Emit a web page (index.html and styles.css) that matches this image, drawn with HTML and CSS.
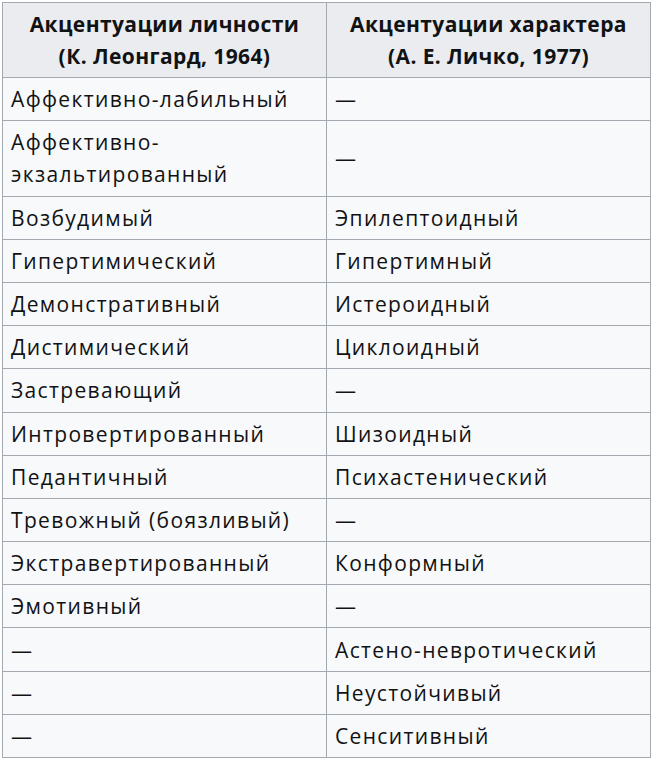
FILE: index.html
```html
<!DOCTYPE html>
<html lang="ru">
<head>
<meta charset="utf-8">
<link rel="stylesheet" href="styles.css">
</head>
<body>
<table class="wikitable">
  <thead>
    <tr>
      <th>Акцентуации личности<br>(К. Леонгард, 1964)</th>
      <th>Акцентуации характера<br>(А. Е. Личко, 1977)</th>
    </tr>
  </thead>
  <tbody>
    <tr><td>Аффективно-лабильный</td><td>—</td></tr>
    <tr><td>Аффективно-<br>экзальтированный</td><td>—</td></tr>
    <tr><td>Возбудимый</td><td>Эпилептоидный</td></tr>
    <tr><td>Гипертимический</td><td>Гипертимный</td></tr>
    <tr><td>Демонстративный</td><td>Истероидный</td></tr>
    <tr><td>Дистимический</td><td>Циклоидный</td></tr>
    <tr><td>Застревающий</td><td>—</td></tr>
    <tr><td>Интровертированный</td><td>Шизоидный</td></tr>
    <tr><td>Педантичный</td><td>Психастенический</td></tr>
    <tr><td>Тревожный (боязливый)</td><td>—</td></tr>
    <tr><td>Экстравертированный</td><td>Конформный</td></tr>
    <tr><td>Эмотивный</td><td>—</td></tr>
    <tr><td>—</td><td>Астено-невротический</td></tr>
    <tr><td>—</td><td>Неустойчивый</td></tr>
    <tr><td>—</td><td>Сенситивный</td></tr>
  </tbody>
</table>
</body>
</html>
```

FILE: styles.css
```css
html, body {
  background: #ffffff;
}
body {
  margin: 2px;
  font-family: "Open Sans", "Noto Sans", sans-serif;
  font-size: 21px;
  color: #111213;
}
.wikitable {
  width: 649px;
  border-collapse: collapse;
  background: #f8f9fa;
  border: 1px solid #a2a9b1;
  table-layout: fixed;
}
.wikitable th,
.wikitable td {
  border: 1px solid #a2a9b1;
  padding: 5.1px 8px;
  line-height: 32px;
  width: 50%;
  white-space: nowrap;
}
.wikitable th {
  background: #eaecf0;
  font-weight: bold;
  text-align: center;
  letter-spacing: 0.4px;
}
.wikitable td {
  text-align: left;
  letter-spacing: 1.35px;
}
```
